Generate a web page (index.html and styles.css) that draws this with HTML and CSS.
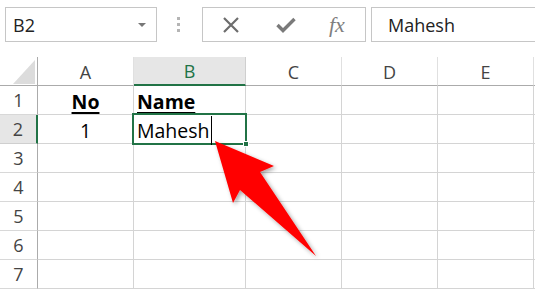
FILE: index.html
```html
<!DOCTYPE html>
<html>
<head>
<meta charset="utf-8">
<link rel="stylesheet" href="styles.css">
</head>
<body>
<div class="page">
  <div class="formula-bar">
    <div class="name-box">
      <span class="name-text">B2</span>
      <span class="dd-arrow"></span>
    </div>
    <div class="grip"><span></span><span></span><span></span></div>
    <div class="fx-buttons">
      <svg class="ico-x" width="18" height="18" viewBox="0 0 18 18"><path d="M2 2 L16 16 M16 2 L2 16" stroke="#6d6d6d" stroke-width="2.2" fill="none"/></svg>
      <svg class="ico-check" width="20" height="16" viewBox="0 0 20 16"><path d="M1.5 8 L7 13.5 L18.5 2" stroke="#7a7a7a" stroke-width="3.4" fill="none" stroke-linejoin="miter"/></svg>
      <span class="fx">fx</span>
    </div>
    <div class="formula-input"><span>Mahesh</span></div>
  </div>

  <div class="sheet">
    <div class="grid">
      <div class="corner"><span class="tri"></span></div>
      <div class="colhead">A</div>
      <div class="colhead active">B</div>
      <div class="colhead">C</div>
      <div class="colhead">D</div>
      <div class="colhead">E</div>
      <div class="colhead last"></div>

      <div class="rowhead">1</div>
      <div class="cell center bold">No</div>
      <div class="cell bold">Name</div>
      <div class="cell"></div><div class="cell"></div><div class="cell"></div><div class="cell"></div>

      <div class="rowhead active">2</div>
      <div class="cell center">1</div>
      <div class="cell">Mahesh</div>
      <div class="cell"></div><div class="cell"></div><div class="cell"></div><div class="cell"></div>

      <div class="rowhead">3</div>
      <div class="cell"></div><div class="cell"></div><div class="cell"></div><div class="cell"></div><div class="cell"></div><div class="cell"></div>
      <div class="rowhead">4</div>
      <div class="cell"></div><div class="cell"></div><div class="cell"></div><div class="cell"></div><div class="cell"></div><div class="cell"></div>
      <div class="rowhead">5</div>
      <div class="cell"></div><div class="cell"></div><div class="cell"></div><div class="cell"></div><div class="cell"></div><div class="cell"></div>
      <div class="rowhead">6</div>
      <div class="cell"></div><div class="cell"></div><div class="cell"></div><div class="cell"></div><div class="cell"></div><div class="cell"></div>
      <div class="rowhead">7</div>
      <div class="cell"></div><div class="cell"></div><div class="cell"></div><div class="cell"></div><div class="cell"></div><div class="cell"></div>
    </div>
    <div class="selection"><span class="caret"></span><span class="handle"></span></div>
  </div>

  <svg class="arrow" width="535" height="289" viewBox="0 0 535 289">
    <defs>
      <filter id="sh" x="-20%" y="-20%" width="140%" height="140%">
        <feDropShadow dx="2" dy="2" stdDeviation="2" flood-color="#000" flood-opacity="0.35"/>
      </filter>
    </defs>
    <polygon points="215,141 274,166 260,172 316,256 240,190 233,203" fill="#ff0000" filter="url(#sh)"/>
  </svg>
</div>
</body>
</html>
```

FILE: styles.css
```css
* { box-sizing: border-box; }
html, body { margin: 0; padding: 0; background: #fff; }
body { width: 535px; height: 289px; overflow: hidden; }
.page { position: relative; width: 535px; height: 289px; overflow: hidden; }

.formula-bar {
  display: flex;
  align-items: stretch;
  height: 35px;
  margin-top: 7px;
  padding-left: 5px;
  font-family: "Open Sans", "Noto Sans", sans-serif;
}
.name-box {
  width: 152px;
  border: 1px solid #c6c6c6;
  display: flex;
  align-items: center;
  justify-content: space-between;
  padding: 0 10px 0 7px;
}
.name-text { font-size: 18px; color: #222; }
.dd-arrow {
  width: 0; height: 0;
  border-left: 4px solid transparent;
  border-right: 4px solid transparent;
  border-top: 4px solid #777;
}
.grip {
  width: 45px;
  display: flex;
  flex-direction: column;
  align-items: center;
  justify-content: center;
  gap: 3px;
  padding-right: 3px;
}
.grip span { width: 3px; height: 3px; background: #b5b5b5; }
.fx-buttons {
  width: 164px;
  border: 1px solid #c6c6c6;
  display: flex;
  align-items: center;
  padding-left: 19px;
}
.ico-x { margin-right: 36px; }
.ico-check { margin-right: 33px; }
.fx {
  font-family: "Liberation Serif", "DejaVu Serif", serif;
  font-style: italic;
  font-size: 22px;
  color: #7f7f7f;
  letter-spacing: 0px;
}
.formula-input {
  flex: 1;
  margin-left: 5px;
  margin-right: -10px;
  border: 1px solid #c6c6c6;
  display: flex;
  align-items: center;
  padding-left: 16px;
  font-size: 18px;
  color: #222;
}

.sheet { position: relative; margin-top: 15px; }
.grid {
  display: grid;
  grid-template-columns: 38px 96px 112px 96px 96px 96px 30px;
  grid-template-rows: 29px repeat(7, 29px);
  font-family: "Open Sans", "Noto Sans", sans-serif;
}
.corner {
  border-right: 1px solid #ababab;
  border-bottom: 1px solid #ababab;
  position: relative;
}
.tri {
  position: absolute;
  left: 13px; top: 3px;
  width: 0; height: 0;
  border-left: 22px solid transparent;
  border-bottom: 24px solid #dcdcdc;
}
.colhead {
  border-right: 1px solid #e0e0e0;
  border-bottom: 1px solid #ababab;
  display: flex;
  align-items: center;
  justify-content: center;
  font-size: 18px;
  color: #444;
  padding-top: 1px;
}
.colhead.active {
  background: #e6e6e6;
  color: #217346;
  border-bottom: 2px solid #217346;
  border-right-color: #cfcfcf;
}
.rowhead {
  border-right: 1px solid #ababab;
  border-bottom: 1px solid #d8d8d8;
  display: flex;
  align-items: center;
  justify-content: center;
  font-size: 18px;
  color: #444;
}
.rowhead.active {
  background: #e6e6e6;
  border-right: 2px solid #217346;
  border-bottom-color: #cfcfcf;
}
.cell {
  border-right: 1px solid #d4d4d4;
  border-bottom: 1px solid #d4d4d4;
  display: flex;
  align-items: center;
  padding-left: 3px;
  padding-top: 2px;
  font-size: 19.5px;
  color: #000;
  font-family: "Open Sans", "Noto Sans", sans-serif;
}
.cell.center { justify-content: center; padding-left: 0; }
.cell.bold { font-weight: bold; text-decoration: underline; text-decoration-thickness: 2px; text-underline-offset: 3px; }

.selection {
  position: absolute;
  left: 132px;
  top: 56px;
  width: 115px;
  height: 32px;
  border: 2px solid #217346;
}
.caret {
  position: absolute;
  left: 77px;
  top: 1px;
  width: 1px;
  height: 29px;
  background: #000;
}
.handle {
  position: absolute;
  right: -4px;
  bottom: -4px;
  width: 6px;
  height: 6px;
  background: #217346;
  border: 1px solid #fff;
}
.arrow { position: absolute; left: 0; top: 0; pointer-events: none; }
```
